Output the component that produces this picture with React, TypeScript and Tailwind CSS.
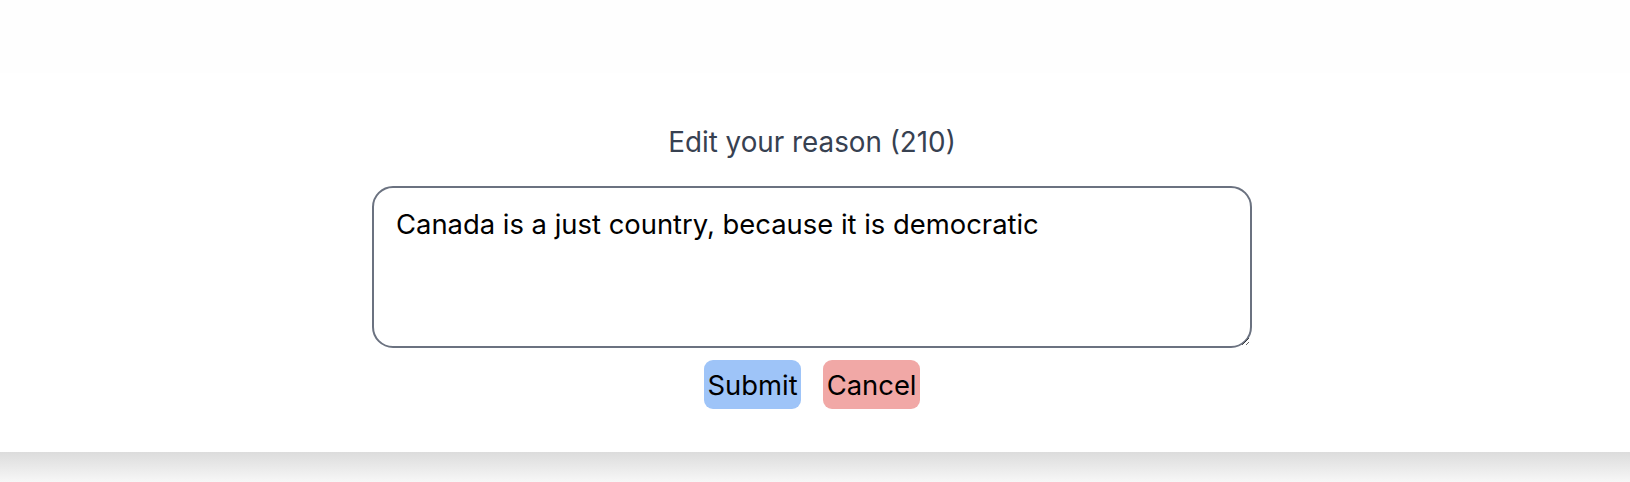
import { useState } from "react";

export default function App() {
  const [reason, setReason] = useState("Canada is a just country, because it is democratic");

  return (
    <div className="flex h-[482px] w-full flex-col bg-[#f6f6f6] font-['Inter',sans-serif]">
      {/* faint header strip */}
      <div className="h-[73px] w-full bg-[#fefefe]" />

      {/* edit panel */}
      <main className="flex h-[379px] w-full flex-col items-center bg-white pr-[6px] pt-[48px]">
        <h2 className="text-[27.8px] leading-[42px] text-[#374151]">Edit your reason (210)</h2>

        <textarea
          value={reason}
          onChange={(e) => setReason(e.target.value)}
          className="mt-[23px] h-[162px] w-[880px] rounded-[21px] border-2 border-[#6b7280] bg-white px-[22px] py-[15px] text-[27.4px] leading-[42px] text-black outline-none"
        />

        <div className="mt-[12px] flex items-center gap-[22px]">
          <button className="rounded-[9px] bg-[#9ec4f8] px-[3.5px] py-[3.5px] text-[27.4px] leading-[42px] text-black">
            Submit
          </button>
          <button className="rounded-[9px] bg-[#f1a8a6] px-[3.5px] py-[3.5px] text-[27.4px] leading-[42px] text-black">
            Cancel
          </button>
        </div>
      </main>

      {/* shadow under panel */}
      <div className="h-[30px] w-full bg-gradient-to-b from-[#dcdcdc] to-[#f7f7f7]" />
    </div>
  );
}
